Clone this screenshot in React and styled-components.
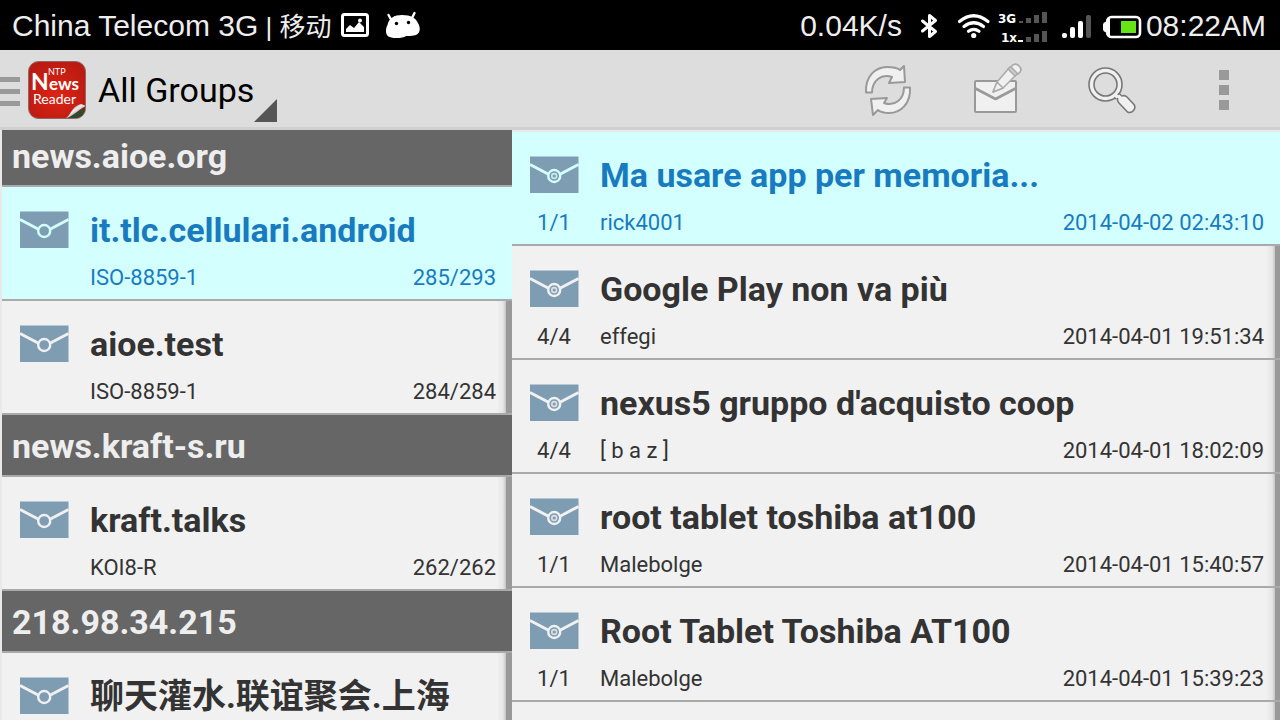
import React from "react";
import styled, { createGlobalStyle } from "styled-components";

const Global = createGlobalStyle`
  * { box-sizing: border-box; }
  body {
    margin: 0;
    background: #f1f1f1;
    font-family: Roboto, "Noto Sans CJK SC", sans-serif;
  }
`;

const Screen = styled.div`
  display: flex;
  flex-direction: column;
  height: 100vh;
  overflow: hidden;
`;

const StatusBar = styled.header`
  display: flex;
  justify-content: space-between;
  height: 50px;
  flex: none;
  padding: 0 14px 0 12px;
  background: #000;
  color: #eee;
  font-family: "Liberation Sans", "Noto Sans CJK SC", sans-serif;
  font-size: 30px;
  line-height: 52px;
  white-space: nowrap;
`;

const StatusGroup = styled.div`
  display: flex;
  gap: ${(p) => p.$gap}px;
  svg { display: block; flex: none; }
`;

const CarrierTail = styled.span`
  font-size: 26px;
`;

const ActionBar = styled.nav`
  display: flex;
  align-items: center;
  justify-content: space-between;
  height: 80px;
  flex: none;
  background: #ddd;
  box-shadow: inset 0 -3px #d0d0d0;
`;

const PlainButton = styled.button`
  display: flex;
  align-items: center;
  height: 80px;
  padding: 0;
  border: 0;
  background: none;
  color: #000;
  font: inherit;
  cursor: pointer;
  svg { display: block; flex: none; }
`;

const HomeButton = styled(PlainButton)`
  gap: 8px;
`;

const Spinner = styled(PlainButton)`
  margin-left: 12px;
  font-size: 34px;
  line-height: 40px;
`;

const Cluster = styled.div`
  display: flex;
`;

const ActionButton = styled(PlainButton)`
  justify-content: center;
  width: 112px;
`;

const Panels = styled.main`
  display: grid;
  grid-template-columns: 2fr 3fr;
  flex: 1;
  min-height: 0;
`;

const Panel = styled.section`
  min-width: 0;
  overflow: hidden;
  background: #f1f1f1;
  border: 0 solid #e9e9e9;
  border-width: ${(p) => (p.$side === "left" ? "0 0 0 2px" : "2px 0 0 0")};
`;

const List = styled.div`
  margin-top: ${(p) => (p.$scrolled ? -5 : 0)}px;
`;

const ServerHeader = styled.h2`
  height: 62px;
  margin: 0;
  padding: 0 10px;
  border-bottom: 2px solid #aaa;
  background: #666;
  color: #eee;
  font-size: 34px;
  font-weight: 700;
  line-height: 62px;
  white-space: nowrap;
`;

const Row = styled.a`
  display: grid;
  grid-template-columns: 88px 1fr;
  grid-template-rows: 42px 26px;
  row-gap: 14px;
  height: 114px;
  padding: 22px 16px 0 0;
  border-bottom: 2px solid #aaa;
  color: ${(p) => (p.$active ? "#187bc0" : "#333")};
  background: ${(p) =>
    p.$active
      ? "#d4ffff"
      : `linear-gradient(to left, #999 0 ${p.$edge}px, #c4c4c4 ${p.$edge}px, #e6e6e6 ${p.$edge + 3}px, #f1f1f1 ${p.$edge + 9}px)`};
  text-decoration: none;
  white-space: nowrap;
`;

const IconCell = styled.span`
  padding: 2px 0 0 17px;
  svg { display: block; }
`;

const Title = styled.strong`
  overflow: hidden;
  font-size: 34px;
  font-weight: 700;
  line-height: 42px;
`;

const Count = styled.span`
  padding-right: 4px;
  font-size: 22px;
  line-height: 26px;
  text-align: center;
`;

const Meta = styled.span`
  display: flex;
  justify-content: space-between;
  font-size: 22px;
  line-height: 26px;
`;

function Envelope({ active, dot }) {
  const line = active ? "#d4ffff" : "#f1f1f1";
  return (
    <svg width="51" height="38" viewBox="0 0 51 38">
      <rect x="1" y="0.5" width="48.5" height="36.5" fill="#7f9db2" />
      <path d="M1 8.5 L20 18.5 M49.5 8.5 L30.5 18.5" stroke={line} strokeWidth="3" />
      <circle cx="25.2" cy="20" r="6" fill="#7f9db2" stroke={line} strokeWidth="2.4" />
      {dot && <circle cx="25.2" cy="20" r="2.4" fill="none" stroke={line} strokeWidth="1.6" opacity="0.8" />}
    </svg>
  );
}

function Item({ title, count, left, right, active, dot, edge }) {
  return (
    <Row href="#" $active={active} $edge={edge}>
      <IconCell><Envelope active={active} dot={dot} /></IconCell>
      <Title>{title}</Title>
      <Count>{count}</Count>
      <Meta><span>{left}</span><span>{right}</span></Meta>
    </Row>
  );
}

const PictureIcon = () => (
  <svg width="30" height="50" viewBox="339 0 30 50">
    <rect x="342.5" y="14.5" width="25" height="21" rx="2" fill="none" stroke="#fff" strokeWidth="3" />
    <path d="M346 32v-3l4-4 4 3 5-6 5 5v5z" fill="#fff" />
    <circle cx="360" cy="20.5" r="2" fill="#fff" />
  </svg>
);

const DroidIcon = () => (
  <svg width="36" height="50" viewBox="385 0 36 50">
    <path d="M388.5 15l4 7M414.5 13l-3 6" stroke="#fff" strokeWidth="2.4" strokeLinecap="round" />
    <path d="M387.5 25C389 18 394 15 402 15c9 0 14 3 16.5 9C421 29 420 34.5 414 35.5c-3 .5-5 .5-8 .5-2 1.5-5 2-10 2-7 0-10-2-10-7 0-3 .5-4 1.5-6z" fill="#fff" />
    <circle cx="396.5" cy="23.5" r="1.7" fill="#000" />
    <circle cx="408.5" cy="22.5" r="1.7" fill="#000" />
  </svg>
);

const BluetoothIcon = () => (
  <svg width="44" height="50" viewBox="906 0 44 50">
    <path d="M922.5 21l13 10.5-6 5V15.5l6 5-13 10.5" fill="none" stroke="#fff" strokeWidth="3" strokeLinecap="round" strokeLinejoin="round" />
  </svg>
);

const WifiIcon = () => (
  <svg width="40" height="50" viewBox="954 0 40 50">
    <g fill="none" stroke="#fff" strokeWidth="3.2" strokeLinecap="round">
      <path d="M959.5 21.5q14-11.5 28.5 0" />
      <path d="M964 26.5q9.7-7.5 19.5 0" />
      <path d="M968.5 31.3q5.2-4 10.5 0" />
    </g>
    <circle cx="973.7" cy="35.5" r="2.6" fill="#fff" />
  </svg>
);

const DualIcon = () => (
  <svg width="56" height="50" viewBox="998 0 56 50">
    <g fill="#fff" fontFamily='"DejaVu Sans", sans-serif' fontSize="12" fontWeight="700">
      <text x="998" y="23">3G</text>
      <text x="1001" y="42">1x</text>
      <rect x="1018" y="40" width="5" height="2" />
    </g>
    <g fill="#555">
      <path d="M1019 21h4v2h-4zM1026 18h5v5h-5zM1034 15h5v8h-5zM1042 12h5v11h-5z" />
      <path d="M1026 37h5v5h-5zM1034 34h5v8h-5zM1042 31h5v11h-5z" />
    </g>
  </svg>
);

const SignalIcon = () => (
  <svg width="40" height="50" viewBox="1058 0 40 50">
    <g fill="#fff">
      <rect x="1062" y="33" width="5" height="5" rx="2" />
      <rect x="1070" y="27" width="5" height="11" rx="2" />
      <rect x="1078" y="21" width="5" height="17" rx="2" />
    </g>
    <rect x="1086" y="15" width="5" height="23" rx="2" fill="#555" />
  </svg>
);

const BatteryIcon = () => (
  <svg width="40" height="50" viewBox="1102 0 40 50">
    <rect x="1107.5" y="17" width="32.5" height="20" rx="4" fill="none" stroke="#fff" strokeWidth="2.6" />
    <path d="M1110 16.5q-4 1-4 5-3 1-3 3v5q0 2 3 3 0 4 4 5z" fill="#fff" />
    <rect x="1121" y="21" width="15" height="12" fill="#66e516" />
  </svg>
);

const Logo = () => (
  <svg width="58" height="58" viewBox="0 0 58 58" fill="#fff">
    <defs>
      <radialGradient id="red" cx="50%" cy="60%" r="65%">
        <stop offset="0" stopColor="#dc2414" />
        <stop offset="1" stopColor="#b91a12" />
      </radialGradient>
      <linearGradient id="curl" x1="0" y1="0" x2="1" y2="1">
        <stop offset="0.2" stopColor="#777" />
        <stop offset="0.45" stopColor="#eee" />
        <stop offset="0.7" stopColor="#888" />
      </linearGradient>
      <clipPath id="tile"><rect x="1" y="1" width="56" height="56" rx="9" /></clipPath>
    </defs>
    <rect x="0.5" y="0.5" width="57" height="57" rx="10" fill="url(#red)" stroke="#8a6a66" />
    <g clipPath="url(#tile)">
      <path d="M37 58L58 46v12z" fill="#2f4a2c" />
      <path d="M36 58c7-2 7-13 17-15l5 2c-8 3-10 9-22 13z" fill="url(#curl)" />
    </g>
    <g fontFamily="Lato, sans-serif">
      <text x="20" y="14" fontSize="9">NTP</text>
      <text x="3" y="29" fontSize="17" fontWeight="700">
        <tspan fontSize="23">N</tspan>
        <tspan x="21">ews</tspan>
      </text>
      <text x="5" y="43" fontSize="14">Reader</text>
    </g>
  </svg>
);

const DrawerIcon = () => (
  <svg width="20" height="34" viewBox="0 -4 20 34" fill="#999">
    <path d="M0 0h20v5H0zM0 12h20v5H0zM0 24h20v5H0z" />
  </svg>
);

const RefreshIcon = () => (
  <svg width="50" height="54" viewBox="0 0 50 54" fill="#f0f0f0" stroke="#999" strokeWidth="2" strokeLinejoin="round">
    <path d="M3 29.5C2 14 12 4 24 4q9 0 13 3l4-4 1 16-16 1 3-6C18 10 9 18 9 29.5z" />
    <path d="M47 24.5C48 40 38 50 26 50q-7 0-11-3l-5 5L8 36l16-1-3 5c11 4 20-4 20-15.5z" />
  </svg>
);

const ComposeIcon = () => (
  <svg width="56" height="56" viewBox="1 0 56 56" fill="#f0f0f0" stroke="#999" strokeWidth="2" strokeLinejoin="round">
    <rect x="4" y="19" width="41" height="31" rx="1" />
    <path d="M4.5 26.5L24.5 37 44.5 26.5" fill="none" strokeWidth="2.6" />
    <g strokeWidth="1.5" stroke="#aaa">
      <path d="M22 30l4-10L39 5l7 7-14 14z" />
      <path d="M22 30l4-10 6 6z" />
      <path d="M37 7l5-4q3-2 6 1 3 3 1 6l-5 4z" fill="#ccc" />
      <path d="M42 3q3-2 6 1 3 3 1 6l-2 2-7-7z" />
    </g>
  </svg>
);

const SearchIcon = () => (
  <svg width="50" height="50" viewBox="0 -1 50 50" fill="#f0f0f0" stroke="#777" strokeWidth="1.6" strokeLinejoin="round">
    <circle cx="18.5" cy="18.5" r="16.5" />
    <circle cx="18.5" cy="18.5" r="11.5" fill="#ddd" />
    <path d="M27.5 32.5l4.5-5 3 2.5q3-1 5 1l7 7.5q2 3-.5 6t-6 1.500l-8.500-9q-2-2-1.500-4.500z" />
    <path d="M28.5 31.5l2.5-2.5" stroke="#f0f0f0" strokeWidth="3" />
  </svg>
);

const OverflowIcon = () => (
  <svg width="10" height="40" viewBox="0 0 10 40" fill="#999">
    <path d="M0 0h10v10H0zM0 15h10v10H0zM0 30h10v10H0z" />
  </svg>
);

const Triangle = () => (
  <svg width="24" height="64" viewBox="0 0 24 64">
    <path d="M23 41v23H0z" fill="#555" />
  </svg>
);

const servers = [
  { name: "news.aioe.org", groups: [
    { title: "it.tlc.cellulari.android", left: "ISO-8859-1", right: "285/293", active: true },
    { title: "aioe.test", left: "ISO-8859-1", right: "284/284" },
  ] },
  { name: "news.kraft-s.ru", groups: [{ title: "kraft.talks", left: "KOI8-R", right: "262/262" }] },
  { name: "218.98.34.215", groups: [{ title: "聊天灌水.联谊聚会.上海" }] },
];

const threads = [
  { title: "Ma usare app per memoria...", count: "1/1", left: "rick4001", right: "2014-04-02 02:43:10", active: true },
  { title: "Google Play non va più", count: "4/4", left: "effegi", right: "2014-04-01 19:51:34" },
  { title: "nexus5 gruppo d'acquisto coop", count: "4/4", left: "[ b a z ]", right: "2014-04-01 18:02:09" },
  { title: "root tablet toshiba at100", count: "1/1", left: "Malebolge", right: "2014-04-01 15:40:57" },
  { title: "Root Tablet Toshiba AT100", count: "1/1", left: "Malebolge", right: "2014-04-01 15:39:23" },
  { title: "" },
];

export default function App() {
  return (
    <Screen>
      <Global />
      <StatusBar>
        <StatusGroup $gap={8}>
          <span>China Telecom 3G<CarrierTail> | 移动</CarrierTail></span>
          <PictureIcon />
          <span />
          <DroidIcon />
        </StatusGroup>
        <StatusGroup $gap={4}>
          <span>0.04K/s</span>
          <BluetoothIcon />
          <WifiIcon />
          <DualIcon />
          <SignalIcon />
          <BatteryIcon />
          <span>08:22AM</span>
        </StatusGroup>
      </StatusBar>
      <ActionBar>
        <Cluster>
          <HomeButton aria-label="Open drawer"><DrawerIcon /><Logo /></HomeButton>
          <Spinner>All Groups<Triangle /></Spinner>
        </Cluster>
        <Cluster>
          <ActionButton aria-label="Refresh"><RefreshIcon /></ActionButton>
          <ActionButton aria-label="Compose"><ComposeIcon /></ActionButton>
          <ActionButton aria-label="Search"><SearchIcon /></ActionButton>
          <ActionButton aria-label="More options"><OverflowIcon /></ActionButton>
        </Cluster>
      </ActionBar>
      <Panels>
        <Panel $side="left">
          <List $scrolled>
            {servers.map((s) => (
              <React.Fragment key={s.name}>
                <ServerHeader>{s.name}</ServerHeader>
                {s.groups.map((g) => <Item key={g.title} edge={6} {...g} />)}
              </React.Fragment>
            ))}
          </List>
        </Panel>
        <Panel $side="right">
          <List>
            {threads.map((t) => <Item key={t.title} edge={5} dot {...t} />)}
          </List>
        </Panel>
      </Panels>
    </Screen>
  );
}
